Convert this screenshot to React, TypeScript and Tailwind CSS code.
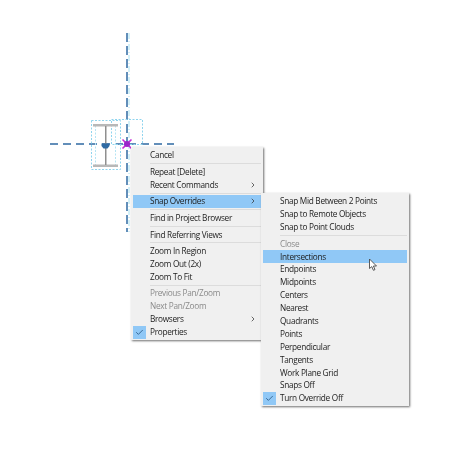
import { ChevronRight, Check } from "lucide-react";

type Row = { label?: string; sep?: boolean; active?: boolean; disabled?: boolean; arrow?: boolean; checked?: boolean };

const mainMenu: Row[] = [
  { label: "Cancel" },
  { sep: true },
  { label: "Repeat [Delete]" },
  { label: "Recent Commands", arrow: true },
  { sep: true },
  { label: "Snap Overrides", arrow: true, active: true },
  { sep: true },
  { label: "Find in Project Browser" },
  { sep: true },
  { label: "Find Referring Views" },
  { sep: true },
  { label: "Zoom In Region" },
  { label: "Zoom Out (2x)" },
  { label: "Zoom To Fit" },
  { sep: true },
  { label: "Previous Pan/Zoom", disabled: true },
  { label: "Next Pan/Zoom", disabled: true },
  { label: "Browsers", arrow: true },
  { label: "Properties", checked: true },
];

const snapMenu: Row[] = [
  { label: "Snap Mid Between 2 Points" },
  { label: "Snap to Remote Objects" },
  { label: "Snap to Point Clouds" },
  { sep: true },
  { label: "Close", disabled: true },
  { label: "Intersections", active: true },
  { label: "Endpoints" },
  { label: "Midpoints" },
  { label: "Centers" },
  { label: "Nearest" },
  { label: "Quadrants" },
  { label: "Points" },
  { label: "Perpendicular" },
  { label: "Tangents" },
  { label: "Work Plane Grid" },
  { label: "Snaps Off" },
  { label: "Turn Override Off", checked: true },
];

function Menu({ rows, className }: { rows: Row[]; className: string }) {
  return (
    <div className={`absolute flex flex-col bg-[#f0f0f0] px-[2px] pb-[1px] pt-[2px] shadow-[1px_1px_2px_#6e6e6e] ${className}`}>
      {rows.map((row, i) =>
        row.sep ? (
          <div key={i} className="ml-[17px] flex h-[3.700px] items-center">
            <div className="h-px w-full bg-[#dcdcdc]" />
          </div>
        ) : (
          <div
            key={i}
            className={`relative flex h-[12.900px] items-center pl-[17px] pr-[4px] text-[8.250px] leading-none tracking-[-0.3px] ${
              row.active ? "bg-[#90c8f6]" : ""
            } ${row.disabled ? "text-[#8a8a8a]" : "text-[#1c1c1c]"}`}
          >
            {row.checked && (
              <span className="absolute left-0 top-0 flex h-[13px] w-[13px] items-center justify-center bg-[#90c8f6]">
                <Check size={9} strokeWidth={2} color="#1f4e79" />
              </span>
            )}
            <span className="flex-1 whitespace-nowrap">{row.label}</span>
            {row.arrow && <ChevronRight size={8} strokeWidth={2.2} color="#333" />}
          </div>
        )
      )}
    </div>
  );
}

export default function App() {
  return (
    <div className="relative h-[466px] w-[474px] overflow-hidden bg-white font-['Open_Sans',sans-serif] blur-[0.3px]">
      <svg className="absolute left-0 top-0" width="474" height="466" viewBox="0 0 474 466">
        <line x1="129" y1="33" x2="129" y2="232" stroke="#a9e2f2" strokeWidth="1" strokeDasharray="6 2 1 2" />
        <line x1="127" y1="33" x2="127" y2="232" stroke="#2f6aa3" strokeWidth="1.5" strokeDasharray="9 4" />
        <line x1="50" y1="144" x2="174" y2="144" stroke="#2f6aa3" strokeWidth="1.5" strokeDasharray="8 5" />
        <rect x="91.500" y="120.500" width="29" height="49" fill="none" stroke="#8fd4ee" strokeWidth="1" strokeDasharray="2 1.500" />
        <rect x="95.500" y="124.500" width="20" height="41" fill="none" stroke="#b5e4f3" strokeWidth="1" strokeDasharray="2 1.500" />
        <rect x="111.500" y="119.500" width="31" height="25" fill="none" stroke="#8fd4ee" strokeWidth="1" strokeDasharray="2 1.500" />
        <rect x="93" y="124" width="25" height="2.500" fill="#b8b8b8" />
        <rect x="93" y="164.500" width="25" height="2.500" fill="#b8b8b8" />
        <rect x="105" y="126" width="1.500" height="39" fill="#8f8f8f" />
        <path d="M101.500 143.500 L109.500 143.500 L109.500 146 L107.500 148.500 L103.500 148.500 L101.500 146 Z" fill="#2f6aa3" />
        <path d="M122.500 139.500 L131.500 148.500 M131.500 139.500 L122.500 148.500" stroke="#c42ad6" strokeWidth="1.600" />
        <circle cx="127" cy="144" r="3" fill="#9a26c9" />
      </svg>
      <Menu rows={mainMenu} className="left-[131px] top-[147px] w-[132px]" />
      <Menu rows={snapMenu} className="left-[261px] top-[193px] w-[148px]" />
      <svg className="absolute left-[368px] top-[258px]" width="10" height="14" viewBox="0 0 10 14">
        <path d="M1.500 1 L1.500 10.500 L3.800 8.600 L5.400 12.300 L7 11.600 L5.400 8 L8.500 8 Z" fill="#ffffff" stroke="#4a4a4a" strokeWidth="0.900" />
      </svg>
    </div>
  );
}
